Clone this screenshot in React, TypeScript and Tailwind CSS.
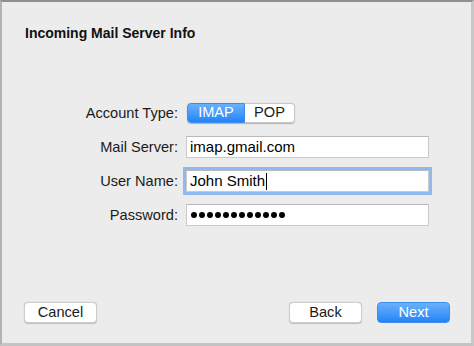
import React from "react";

const labelCls = "text-right text-[14.6px] leading-[22px] text-[#1a1a1a]";
const fieldCls =
  "h-[22px] w-[243px] bg-white border border-[#cacaca] border-t-[#b9b9b9] flex items-center pl-[3px] text-[15px] text-black";
const btnCls =
  "w-[73px] h-[21px] rounded-[4px] text-[14.6px] leading-none";

const App = () => {
  return (
    <div className="w-[474px] h-[346px] bg-[#ececec] border-t-2 border-l-2 border-r-[3px] border-b-[3px] border-t-[#8f8f8f] border-l-[#b3b3b3] border-r-[#c8c8c8] border-b-[#c4c4c4] flex flex-col font-['Liberation_Sans',Arial,sans-serif]">
      <h1 className="mt-[23px] ml-[23px] text-[14px] leading-[17px] font-bold text-[#111]">
        Incoming Mail Server Info
      </h1>

      <div className="mt-[60px] grid grid-cols-[176px_243px] gap-x-2 gap-y-[12px]">
        <div className={labelCls}>Account Type:</div>
        <div className="h-[22px] flex items-center pl-px">
          <div className="flex h-[20px] text-[14.6px] rounded-[4px] shadow-[0_0.5px_1px_rgba(0,0,0,0.25)]">
            <div className="w-[58px] flex items-center justify-center rounded-l-[4px] text-white bg-gradient-to-b from-[#69b1fb] to-[#1f84f7] border border-[#3b8ef0]">
              IMAP
            </div>
            <div className="w-[50px] flex items-center justify-center rounded-r-[4px] bg-white border border-l-0 border-[#c8c8c8] text-[#1a1a1a]">
              POP
            </div>
          </div>
        </div>

        <div className={labelCls}>Mail Server:</div>
        <div className={fieldCls}>imap.gmail.com</div>

        <div className={labelCls}>User Name:</div>
        <div className={`${fieldCls} border-[#7aa8e6] shadow-[0_0_0_3px_#8fbaef]`}>
          John Smith
          <span className="ml-px w-px h-[17px] bg-black" />
        </div>

        <div className={labelCls}>Password:</div>
        <div className={`${fieldCls} gap-[2px] pl-[4px]`}>
          {Array.from({ length: 12 }).map((_, i) => (
            <span key={i} className="w-[6px] h-[6px] rounded-full bg-black" />
          ))}
        </div>
      </div>

      <div className="mt-auto mb-[20px] flex items-center pl-[22px] pr-[21px]">
        <button className={`${btnCls} bg-white border border-[#cdcdcd] shadow-[0_0.5px_1px_rgba(0,0,0,0.2)] text-[#1a1a1a]`}>
          Cancel
        </button>
        <div className="ml-auto flex gap-[15px]">
          <button className={`${btnCls} bg-white border border-[#cdcdcd] shadow-[0_0.5px_1px_rgba(0,0,0,0.2)] text-[#1a1a1a]`}>
            Back
          </button>
          <button className={`${btnCls} bg-gradient-to-b from-[#69b1fb] to-[#1f84f7] border border-[#3b8ef0] text-white`}>
            Next
          </button>
        </div>
      </div>
    </div>
  );
};

export default App;
